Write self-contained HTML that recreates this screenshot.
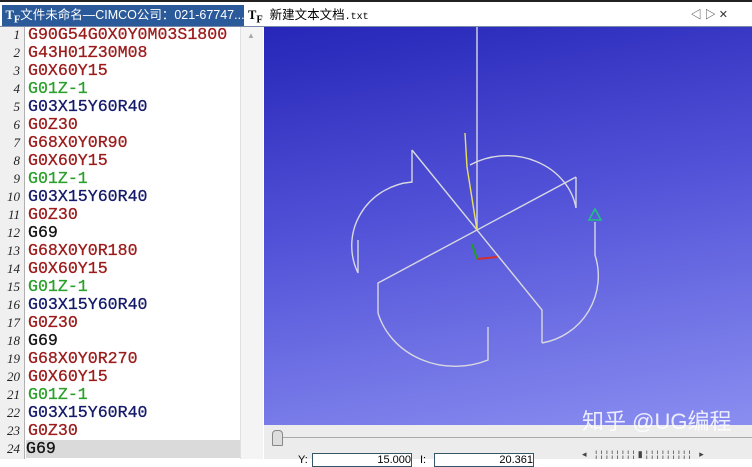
<!DOCTYPE html>
<html><head><meta charset="utf-8"><style>
body{margin:0;width:752px;height:459px;overflow:hidden;background:#fff;position:relative;font-family:"Liberation Sans","Noto Sans CJK SC",sans-serif}
.top{position:absolute;left:0;top:0;width:752px;height:2px;background:#222}
.tabbar{position:absolute;left:0;top:2px;width:752px;height:24px;background:#fff;border-bottom:1px solid #7a8aa8}
.tab1{position:absolute;left:2px;top:3px;width:242px;height:21px;background:#2a5a9a;color:#fff;font-size:12.5px;line-height:21px;white-space:nowrap;overflow:hidden}
.tab2{position:absolute;left:248px;top:3px;height:21px;color:#000;font-size:12.5px;line-height:21px;white-space:nowrap}
.gut{position:absolute;left:0;top:27px;width:24px;height:432px;background:#f0f0f0;border-right:1px solid #b0b0b0}
.code{position:absolute;left:0;top:26px;width:240px}
.ln{height:18px;position:relative;font-family:"Liberation Mono",monospace;font-size:16.6px;line-height:18px;white-space:pre;-webkit-text-stroke:0.3px}
.ln i{position:absolute;left:0;width:20px;text-align:right;font-family:"Liberation Serif",serif;font-size:13px;color:#222;-webkit-text-stroke:0}
.ln span{position:absolute;left:28px}
.r{color:#9c1b1b}.g{color:#2aa02a}.b{color:#141a6a}.k{color:#111}
.hl{background:#dadada;left:26px!important;right:0}
.sb{position:absolute;left:240px;top:27px;width:22px;height:432px;background:#f4f4f4;border-left:1px solid #e0e0e0}
.vp{position:absolute;left:264px;top:27px;width:488px;height:398px;background:linear-gradient(170deg,#2626b8 0%,#5252d8 45%,#8a8ef0 100%)}
.bot{position:absolute;left:264px;top:425px;width:488px;height:34px;background:#ececec}
</style></head><body>
<div class="top"></div>
<div class="tabbar">
<div class="tab1">&nbsp;<b style="font-family:'Liberation Serif'">T<sub>F</sub></b>文件未命名—CIMCO公司：021-67747...</div>
<div class="tab2"><b style="font-family:'Liberation Serif'">T<sub>F</sub></b>&nbsp; 新建文本文档<span style="font-family:'Liberation Mono';font-size:10px">.txt</span></div>
<div style="position:absolute;right:24px;top:4px;font-size:11px;color:#333">◁ ▷ ✕</div>
</div>
<div class="gut"></div>
<div class="sb"><div style="position:absolute;left:6px;top:4px;font-size:8px;color:#aaa">▲</div></div>
<div class="code">
<div class="ln"><i>1</i><span class="r">G90G54G0X0Y0M03S1800</span></div>
<div class="ln"><i>2</i><span class="r">G43H01Z30M08</span></div>
<div class="ln"><i>3</i><span class="r">G0X60Y15</span></div>
<div class="ln"><i>4</i><span class="g">G01Z-1</span></div>
<div class="ln"><i>5</i><span class="b">G03X15Y60R40</span></div>
<div class="ln"><i>6</i><span class="r">G0Z30</span></div>
<div class="ln"><i>7</i><span class="r">G68X0Y0R90</span></div>
<div class="ln"><i>8</i><span class="r">G0X60Y15</span></div>
<div class="ln"><i>9</i><span class="g">G01Z-1</span></div>
<div class="ln"><i>10</i><span class="b">G03X15Y60R40</span></div>
<div class="ln"><i>11</i><span class="r">G0Z30</span></div>
<div class="ln"><i>12</i><span class="k">G69</span></div>
<div class="ln"><i>13</i><span class="r">G68X0Y0R180</span></div>
<div class="ln"><i>14</i><span class="r">G0X60Y15</span></div>
<div class="ln"><i>15</i><span class="g">G01Z-1</span></div>
<div class="ln"><i>16</i><span class="b">G03X15Y60R40</span></div>
<div class="ln"><i>17</i><span class="r">G0Z30</span></div>
<div class="ln"><i>18</i><span class="k">G69</span></div>
<div class="ln"><i>19</i><span class="r">G68X0Y0R270</span></div>
<div class="ln"><i>20</i><span class="r">G0X60Y15</span></div>
<div class="ln"><i>21</i><span class="g">G01Z-1</span></div>
<div class="ln"><i>22</i><span class="b">G03X15Y60R40</span></div>
<div class="ln"><i>23</i><span class="r">G0Z30</span></div>
<div class="ln"><i>24</i><span class="k hl">G69</span></div>
</div>
<div class="vp"></div>
<div class="bot">
<div style="position:absolute;left:10px;top:12px;right:0;height:1px;background:#aaa"></div>
<div style="position:absolute;left:8px;top:5px;width:9px;height:14px;background:#ddd;border:1px solid #888;border-radius:4px 4px 1px 1px"></div>
<div style="position:absolute;left:34px;top:29px;font-size:11px">Y:</div>
<div style="position:absolute;left:48px;top:28px;width:98px;height:12px;background:#fff;border:1px solid #356;font-size:11px;text-align:right">15.000</div>
<div style="position:absolute;left:156px;top:29px;font-size:11px">I:</div>
<div style="position:absolute;left:170px;top:28px;width:98px;height:12px;background:#fff;border:1px solid #356;font-size:11px;text-align:right">20.361</div>
<div style="position:absolute;left:318px;top:24px;font-size:9px;color:#444;letter-spacing:3px">◂ ¦¦¦¦¦¦¦¦▮¦¦¦¦¦¦¦¦¦ ▸</div>
</div>
<svg style="position:absolute;left:0;top:0" width="752" height="459" viewBox="0 0 752 459" fill="none">
<g stroke="#d8d8e0" stroke-width="1.4">
<line x1="477" y1="27" x2="477" y2="230"/>
<polyline points="412,150 542,310 542,343"/>
<path d="M542,343 A68,68 0 0 0 595,255 L595,222"/>
<polyline points="576,177 378,283 378,313"/>
<path d="M378,313 A80,72 0 0 0 488,360 L488,327"/>
<path d="M412,150 L412,182 A66,64 0 0 0 358,273 L358,240"/>
<path d="M576,208 A70,62 0 0 0 470,165"/>
<line x1="576" y1="177" x2="576" y2="208"/>
</g>
<polyline points="465,133 467,167 477,230" stroke="#e8e060" stroke-width="1.4"/>
<polygon points="595,209 589,220 601,220" stroke="#20c080" stroke-width="1.6"/>
<line x1="477" y1="259" x2="497" y2="257" stroke="#d03030" stroke-width="2"/>
<line x1="477" y1="259" x2="472" y2="244" stroke="#20a020" stroke-width="2"/>
</svg>
<div style="position:absolute;left:582px;top:409px;font-size:22px;line-height:26px;color:rgba(255,255,255,.85)">知乎 @UG编程</div>
</body></html>
